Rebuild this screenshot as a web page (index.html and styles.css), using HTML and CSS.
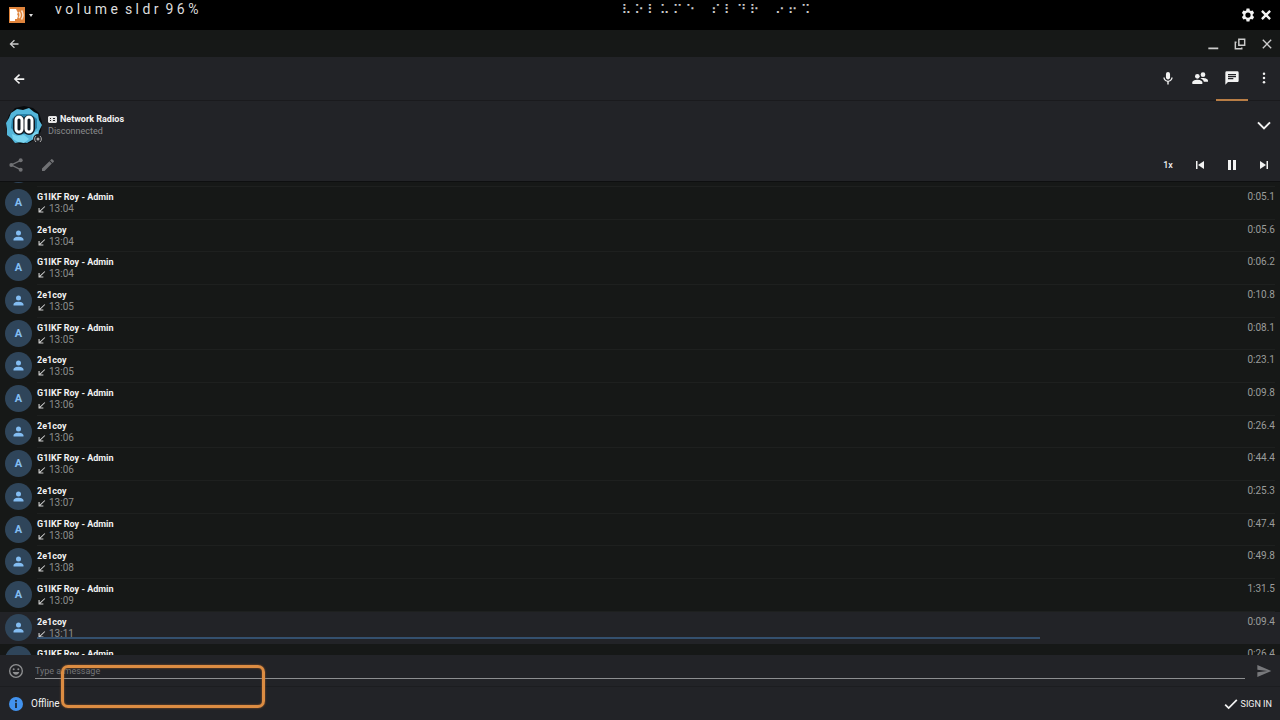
FILE: index.html
```html
<!DOCTYPE html>
<html lang="en">
<head>
  <meta charset="UTF-8">
  <meta name="viewport" content="width=device-width, initial-scale=1.0">
  <title>Network Radios</title>
  <link rel="stylesheet" href="styles.css">
</head>
<body>
  <!-- Shared icons -->
  <svg class="sprite" aria-hidden="true">
    <symbol id="back" viewBox="0 0 24 24"><path d="M21 10.500H8.200l5.600-5.100L12 3.500 3 12l9 8.500 1.800-1.900-5.600-5.100H21z"/></symbol>
    <symbol id="close" viewBox="0 0 24 24"><path d="M19 6.400 17.600 5 12 10.600 6.400 5 5 6.400l5.600 5.600L5 17.600 6.400 19l5.600-5.600 5.600 5.600 1.400-1.400-5.600-5.600z"/></symbol>
    <symbol id="person" viewBox="0 0 24 24"><path d="M12 12a4 4 0 1 0 0-8 4 4 0 0 0 0 8zm0 2c-2.700 0-8 1.300-8 4v2h16v-2c0-2.700-5.300-4-8-4z"/></symbol>
    <symbol id="received" viewBox="0 0 24 24"><path d="M22 4.800 20.200 3 7 15.600V8H4v12h13v-3H9z"/></symbol>
  </svg>

  <!-- Braille display strip -->
  <header class="braille-bar">
    <button class="talkback" aria-label="TalkBack">
      <svg class="talkback-logo" viewBox="0 0 16 16"><rect width="16" height="16" fill="#df843c"/><path fill="#fff" d="M1 2h6l2 4-1 1 1 2-1 3H6v2H1z"/><path fill="none" stroke="#fbe3cd" stroke-width="1.500" d="M10 5c1.500 2 1.500 4 0 6M12.500 3.500c2 3 2 6 0 9"/></svg>
      <span class="caret"></span>
    </button>
    <div class="speech">v o l u m e  s l d r  9 6 %</div>
    <div class="cells"><span>⠧</span><span>⠕</span><span>⠇</span><span>⠥</span><span>⠍</span><span>⠑</span><span></span><span>⠎</span><span>⠇</span><span>⠙</span><span>⠗</span><span></span><span>⠔</span><span>⠖</span><span>⠩</span></div>
    <div class="bar-buttons">
      <button aria-label="Settings"><svg class="icon" viewBox="0 0 24 24"><path fill-rule="evenodd" d="M9.500 1h5l.6 3.200 1.900 1.100 3-1.100 2.500 4.300-2.400 2.100v2.800l2.400 2.100-2.500 4.300-3-1.100-1.900 1.100-.6 3.200h-5l-.6-3.200L7 18.700l-3 1.100-2.500-4.300 2.400-2.100v-2.800L1.500 8.500 4 4.200l3 1.100 1.900-1.100zM12 7.500a4.500 4.500 0 1 0 0 9 4.500 4.500 0 0 0 0-9z"/></svg></button>
      <button aria-label="Close braille display"><svg class="icon bold"><use href="#close"/></svg></button>
    </div>
  </header>

  <!-- Window caption -->
  <div class="caption">
    <button aria-label="Back"><svg class="icon small"><use href="#back"/></svg></button>
    <div class="window-buttons">
      <button aria-label="Minimize"><svg class="icon" viewBox="0 0 24 24"><path d="M4 18h17v3H4z"/></svg></button>
      <button aria-label="Restore"><svg class="icon" viewBox="0 0 24 24"><path fill="none" stroke="currentColor" stroke-width="2.500" d="M10 4h10v10H10zM6 9H4v11h11v-2"/></svg></button>
      <button aria-label="Close"><svg class="icon large"><use href="#close"/></svg></button>
    </div>
  </div>

  <!-- App toolbar -->
  <nav class="toolbar">
    <button aria-label="Navigate up"><svg class="icon"><use href="#back"/></svg></button>
    <div class="tabs">
      <button aria-label="Talk"><svg class="icon" viewBox="0 0 24 24"><path d="M12 14.500c1.900 0 3.500-1.500 3.500-3.300V5a3.500 3.500 0 0 0-7 0v6.200c0 1.800 1.600 3.300 3.500 3.300zm5.700-3.300c0 3.200-2.700 5.400-5.700 5.400s-5.700-2.200-5.700-5.400H4c0 3.800 3 6.800 6.800 7.300V23h2.400v-4.500c3.800-.5 6.800-3.500 6.800-7.300z"/></svg></button>
      <button aria-label="Users"><svg class="icon large" viewBox="0 0 24 24"><circle cx="8" cy="9.500" r="3.500"/><path d="M8 14.500c-3 0-7.500 1.300-7.500 4V21h15v-2.500c0-2.700-4.500-4-7.500-4z"/><circle cx="16.500" cy="7" r="3.500"/><path d="M16.500 12c-1.300 0-2.700.2-4 .7 3 .9 5 2.500 5.300 4.800H24V16c0-2.700-4.500-4-7.500-4z"/></svg></button>
      <button class="active" aria-label="Messages"><svg class="icon large" viewBox="0 0 24 24"><path fill-rule="evenodd" d="M20 2H4a2 2 0 0 0-2 2v18l4-4h14c1.100 0 2-.9 2-2V4a2 2 0 0 0-2-2zM6 9h12v2H6zm8 5H6v-2h8zm4-6H6V6h12z"/></svg></button>
      <button aria-label="More options"><svg class="icon small" viewBox="0 0 24 24"><circle cx="12" cy="3.500" r="2.500"/><circle cx="12" cy="12" r="2.500"/><circle cx="12" cy="20.500" r="2.500"/></svg></button>
    </div>
  </nav>

  <!-- Channel details and playback -->
  <section class="channel">
    <div class="channel-info">
      <svg class="channel-logo" viewBox="0 0 40 40">
        <path fill="#080b0d" d="M11 3l9-2 9 2 6 5 3 9-1 9-4 7-8 5-9 1-8-4-5-7-1-9 3-9z"/>
        <path fill="#54b6da" d="M13 4l6 1 6-2 5 4 4 2 1 6 3 5-3 6-1 6-6 3-5 3-6-1-6 1-4-5-4-3v-6l-1-6 3-5 2-5z"/>
        <path fill="#2781a8" d="M8 14l5-5h14l6 5v9l-6 6H13l-6-6z"/>
        <path fill="#79d4ef" d="M8 29l5 2 7-1 5 4-5 4-6-1-5-3zM29 28l5-2-1 5-5 3z"/>
        <g fill="none" stroke="#101820" stroke-width="6"><rect x="12" y="13" width="6" height="14" rx="3"/><rect x="22" y="13" width="6" height="14" rx="3"/></g>
        <g fill="none" stroke="#fff" stroke-width="3"><rect x="12" y="12" width="6" height="15" rx="3"/><rect x="22" y="12" width="6" height="15" rx="3"/></g>
        <circle cx="34" cy="34" r="5" fill="#222327"/><path fill="none" stroke="#b0b0b0" d="M32 31a4 4 0 0 0 0 6M36 31a4 4 0 0 1 0 6"/><circle cx="34" cy="34" r="1.500" fill="#b0b0b0"/>
      </svg>
      <div class="channel-text">
        <h1><svg class="badge" viewBox="0 0 9 7"><path fill-rule="evenodd" d="M1 0h7l1 1v5l-1 1H1L0 6V1zM2 2v1h1V2zm3 0v1h2V2zM2 4v1h1V4zm3 0v1h2V4z"/></svg>Network Radios</h1>
        <p>Disconnected</p>
      </div>
      <button class="expand" aria-label="Expand"><svg class="icon large" viewBox="0 0 24 24"><path fill="none" stroke="currentColor" stroke-width="3" d="m3 8 9 9 9-9"/></svg></button>
    </div>
    <div class="controls">
      <button class="dim" aria-label="Share"><svg class="icon large" viewBox="0 0 24 24"><path fill="none" stroke="currentColor" stroke-width="2" d="M19 5 5 12l14 7"/><circle cx="19" cy="5" r="3"/><circle cx="5" cy="12" r="3"/><circle cx="19" cy="19" r="3"/></svg></button>
      <button class="dim" aria-label="Edit"><svg class="icon large" viewBox="0 0 24 24"><path d="M3 17.200V21h3.800L17.800 9.900l-3.700-3.700zM20.700 7c.4-.4.4-1 0-1.400l-2.300-2.300a1 1 0 0 0-1.400 0l-1.900 1.800 3.800 3.800z"/></svg></button>
      <div class="player">
        <button class="speed">1x</button>
        <button aria-label="Previous"><svg class="icon small" viewBox="0 0 24 24"><path d="M4 4h3v16H4zm4 8 12-8v16z"/></svg></button>
        <button aria-label="Pause"><svg class="icon small" viewBox="0 0 24 24"><path d="M4 2h6v20H4zm10 0h6v20h-6z"/></svg></button>
        <button aria-label="Next"><svg class="icon small" viewBox="0 0 24 24"><path d="m4 4 12 8-12 8zm13 0h3v16h-3z"/></svg></button>
      </div>
    </div>
  </section>

  <!-- Voice messages, filled by the script -->
  <main class="history">
    <ul class="messages" id="messages"></ul>
  </main>

  <!-- Message box -->
  <form class="composer">
    <button type="button" class="smiley" aria-label="Emoji"><svg class="icon large" viewBox="0 0 24 24"><circle cx="12" cy="12" r="9.500" fill="none" stroke="currentColor" stroke-width="2"/><circle cx="8.500" cy="9.500" r="1.500"/><circle cx="15.500" cy="9.500" r="1.500"/><path d="M7 13.500h10c-.8 2.500-2.700 4-5 4s-4.200-1.500-5-4z"/></svg></button>
    <div class="field">
      <input type="text" placeholder="Type a message" aria-label="Type a message">
      <span class="focus-ring"></span>
    </div>
    <button type="button" class="send" aria-label="Send"><svg class="icon large" viewBox="0 0 24 24"><path d="M2 21 23 12 2 3v7l15 2-15 2z"/></svg></button>
  </form>

  <footer class="status">
    <svg class="info" viewBox="0 0 24 24"><circle cx="12" cy="12" r="12" fill="#4292ee"/><path fill="#1d2632" d="M10.500 5h3v3h-3zm0 5h3v9h-3z"/></svg>
    <span>Offline</span>
    <button class="sign-in"><svg class="icon" viewBox="0 0 24 24"><path fill="none" stroke="currentColor" stroke-width="3" d="m2 13 6 6L22 5"/></svg>SIGN IN</button>
  </footer>

  <script>
    const admin = 'G1IKF Roy - Admin';
    const guest = '2e1coy';

    const messages = [
      [guest, '13:04', '0:04.8'],
      [admin, '13:04', '0:05.1'],
      [guest, '13:04', '0:05.6'],
      [admin, '13:04', '0:06.2'],
      [guest, '13:05', '0:10.8'],
      [admin, '13:05', '0:08.1'],
      [guest, '13:05', '0:23.1'],
      [admin, '13:06', '0:09.8'],
      [guest, '13:06', '0:26.4'],
      [admin, '13:06', '0:44.4'],
      [guest, '13:07', '0:25.3'],
      [admin, '13:08', '0:47.4'],
      [guest, '13:08', '0:49.8'],
      [admin, '13:09', '1:31.5'],
      [guest, '13:11', '0:09.4', 81],
      [admin, '13:11', '0:26.4']
    ];

    const person = '<svg class="person"><use href="#person"/></svg>';

    document.getElementById('messages').innerHTML = messages.map(([name, time, length, played]) => `
      <li class="message${played ? ' playing' : ''}">
        <span class="avatar">${name === admin ? 'A' : person}</span>
        <div class="body">
          <div class="text">
            <strong>${name}</strong>
            <span class="time"><svg class="received"><use href="#received"/></svg>${time}</span>
          </div>
          <span class="length">${length}</span>
          ${played ? `<div class="progress" style="width: ${played}%"></div>` : ''}
        </div>
      </li>`).join('');
  </script>
</body>
</html>
```
FILE: styles.css
```css
* {
  box-sizing: border-box;
}

body {
  margin: 0;
  height: 100vh;
  display: flex;
  flex-direction: column;
  overflow: hidden;
  background: #161817;
  color: #f2f2f2;
  font-family: Roboto, Arial, sans-serif;
  font-size: 10px;
  line-height: 12px;
}

button {
  display: flex;
  align-items: center;
  justify-content: center;
  flex: none;
  width: 32px;
  padding: 0;
  border: none;
  background: none;
  color: inherit;
  font: inherit;
  cursor: pointer;
}

h1,
p {
  margin: 0;
}

.sprite {
  position: absolute;
  width: 0;
  height: 0;
}

.icon {
  width: 14px;
  height: 14px;
  fill: currentColor;
}

.icon.small {
  width: 12px;
  height: 12px;
}

.icon.large {
  width: 16px;
  height: 16px;
}

.icon.bold {
  stroke: currentColor;
  stroke-width: 2;
}

/* Braille display strip */
.braille-bar {
  display: grid;
  grid-template-columns: 55px 17fr 192px 14fr;
  flex: none;
  height: 30px;
  background: #000;
}

.talkback {
  width: 36px;
  padding-left: 6px;
  gap: 4px;
}

.talkback-logo {
  width: 16px;
  height: 16px;
}

.caret {
  border: 2px solid transparent;
  border-top: 3px solid #ddd;
  border-bottom: 0;
}

.speech {
  font-size: 14px;
  line-height: 18px;
  white-space: pre;
  color: #ddd;
}

.cells {
  display: grid;
  grid-template-columns: repeat(15, 1fr);
  padding-top: 1px;
  font-family: "DejaVu Sans", sans-serif;
  font-size: 13px;
  line-height: 18px;
  color: #ccc;
}

.bar-buttons {
  display: flex;
  justify-content: flex-end;
  padding-right: 5px;
}

.bar-buttons button {
  width: 18px;
}

/* Window caption */
.caption {
  display: flex;
  justify-content: space-between;
  flex: none;
  height: 27px;
  color: #ccc;
}

.caption button {
  width: 27px;
}

.window-buttons {
  display: flex;
}

/* App toolbar */
.toolbar {
  display: flex;
  justify-content: space-between;
  flex: none;
  height: 44px;
  background: #222327;
  border-bottom: 1px solid #1a1a1d;
}

.toolbar > button {
  width: 37px;
}

.tabs {
  display: flex;
}

.tabs button {
  border-bottom: 2px solid transparent;
  margin-bottom: -1px;
}

.tabs .active {
  border-bottom-color: #b87d45;
}

/* Channel details */
.channel {
  flex: none;
  background: #222327;
  border-bottom: 1px solid #0e0f10;
}

.channel-info {
  display: flex;
  align-items: center;
  height: 48px;
}

.channel-logo {
  width: 40px;
  height: 40px;
  margin: 0 4px;
}

.channel-text {
  flex: 1;
  font-size: 9px;
}

.channel-text h1 {
  display: flex;
  align-items: center;
  gap: 3px;
  font-size: inherit;
  font-weight: 700;
}

.channel-text p {
  color: #8b8c8e;
}

.badge {
  width: 9px;
  height: 7px;
  fill: #e4e4e4;
}

.controls {
  display: flex;
  height: 32px;
}

.player {
  display: flex;
  margin-left: auto;
}

.speed {
  font-size: 9px;
  font-weight: 500;
}

.dim {
  color: #707174;
}

/* Voice messages */
.history {
  flex: 1;
  min-height: 0;
  overflow: hidden;
}

.messages {
  margin: -28px 0 0;
  padding: 0;
  list-style: none;
}

.message {
  display: flex;
  height: 33px;
  padding: 0 5px;
}

.message:nth-child(3n) {
  height: 32px;
}

.message.playing {
  background: #222327;
}

.avatar {
  display: flex;
  align-items: center;
  justify-content: center;
  flex: none;
  width: 27px;
  height: 27px;
  margin: 2px 5px 0 0;
  border-radius: 50%;
  background: #2f455a;
  color: #83bdf2;
  font-size: 11px;
  font-weight: 700;
}

.person {
  width: 15px;
  height: 15px;
  fill: currentColor;
}

.body {
  position: relative;
  display: flex;
  justify-content: space-between;
  flex: 1;
  padding-top: 4px;
  border-bottom: 1px solid #1e201f;
}

.playing .body {
  border-bottom-color: transparent;
}

.text strong {
  display: block;
  font-size: 9px;
  font-weight: 700;
}

.time {
  display: flex;
  align-items: center;
  gap: 3px;
  color: #8c8e8d;
}

.received {
  width: 9px;
  height: 9px;
  fill: #d0d0d0;
}

.length {
  color: #9a9c9b;
}

.progress {
  position: absolute;
  left: 0;
  bottom: 4px;
  height: 2px;
  background: #34506e;
}

/* Message box */
.composer {
  display: flex;
  flex: none;
  height: 32px;
  background: #222327;
  border-bottom: 1px solid #1c1d20;
}

.smiley {
  color: #8f9092;
}

.send {
  color: #77787b;
}

.field {
  position: relative;
  flex: 1;
  padding: 0 3px;
}

.field input {
  display: block;
  width: 100%;
  height: 24px;
  padding: 9px 0 0;
  border: none;
  border-bottom: 1px solid #8d8e90;
  outline: none;
  background: none;
  color: #f2f2f2;
  font: inherit;
  font-size: 9px;
}

.field input::placeholder {
  color: #747578;
  opacity: 1;
}

/* TalkBack focus frame */
.focus-ring {
  position: absolute;
  z-index: 1;
  top: 10px;
  left: 29px;
  width: 204px;
  height: 43px;
  border: 3px solid #dc8c42;
  border-radius: 7px;
  box-shadow: 0 0 2px #a5602a, inset 0 0 2px #a5602a;
  pointer-events: none;
}

/* Bottom status line */
.status {
  display: flex;
  align-items: center;
  flex: none;
  height: 33px;
  padding: 0 8px 0 9px;
  gap: 8px;
  background: #222327;
}

.info {
  width: 14px;
  height: 14px;
}

.sign-in {
  width: auto;
  margin-left: auto;
  gap: 3px;
  font-size: 9px;
}
```
